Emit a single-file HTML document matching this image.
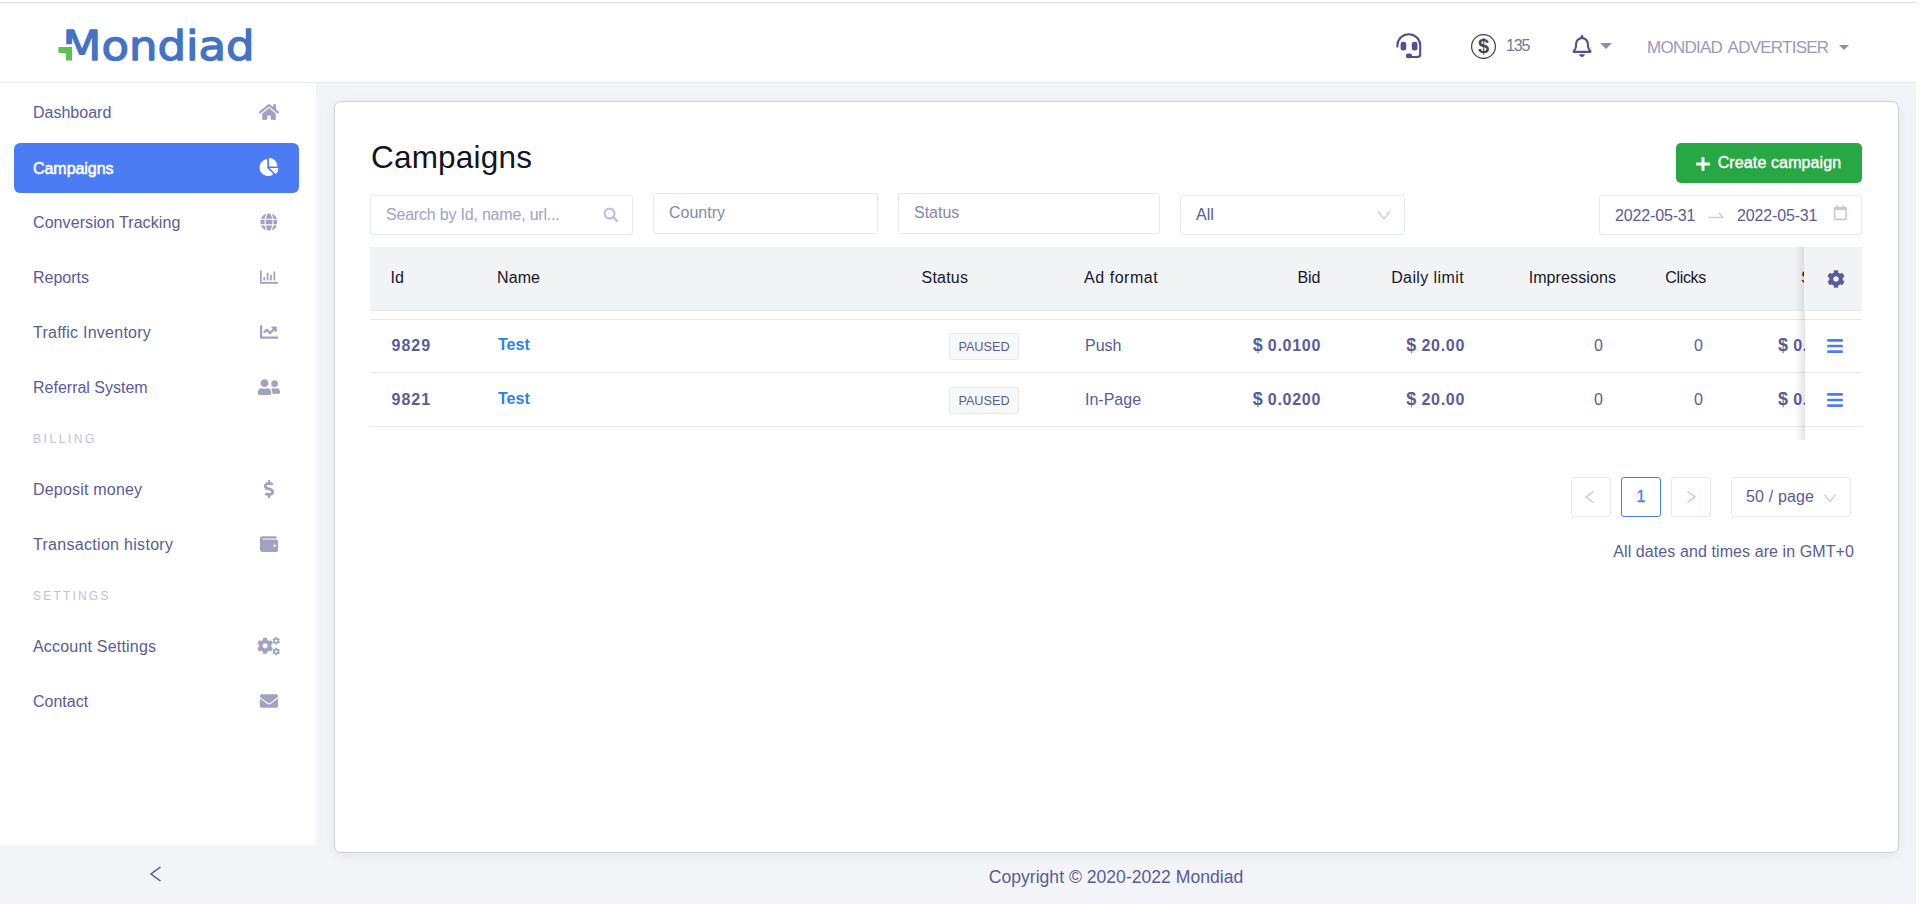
<!DOCTYPE html>
<html lang="en">
<head>
<meta charset="utf-8">
<title>Mondiad - Campaigns</title>
<style>
*{box-sizing:border-box;margin:0;padding:0}
html,body{width:1920px;height:904px;overflow:hidden;background:#fff}
body{font-family:"Liberation Sans",sans-serif;font-size:16px;color:#595c97;position:relative}
.abs{position:absolute}
.app{position:absolute;left:0;top:0;width:1916px;height:904px;background:#f2f4f8;overflow:hidden}
.topline{position:absolute;left:0;top:0;width:1916px;height:3px;background:#fff;border-bottom:1px solid #dbdedd}
.header{position:absolute;left:0;top:3px;width:1916px;height:80px;background:#fff;border-bottom:1px solid #e4e9f0}
.sidebar{position:absolute;left:0;top:83px;width:316px;height:762px;background:#fff}
.nav{position:absolute;left:14px;width:285px;height:50px;border-radius:6px}
.nav span{position:absolute;left:19px;top:1px;line-height:50px;font-size:16px;color:#595c97;white-space:nowrap}
.nav.active{background:#4b7cf3}
.nav.active span{color:#fff;-webkit-text-stroke:0.55px #fff;letter-spacing:-0.05px}
.ico{position:absolute;transform:translate(-50%,-50%)}
.cat{position:absolute;left:33px;font-size:12px;letter-spacing:2.4px;color:#c3bedc;text-transform:uppercase;line-height:14px}
.panel{position:absolute;left:334px;top:101px;width:1565px;height:752px;background:#fff;border:1px solid #cdd1d8;border-radius:7px;box-shadow:0 4px 12px 0 rgba(20,19,34,.04),0 0 12px 0 rgba(20,19,34,.03)}
.title{position:absolute;left:371px;top:138px;font-size:31.5px;line-height:38px;color:#141322;letter-spacing:0.2px;white-space:nowrap}
.inp{position:absolute;background:#fff;border:1px solid #e4e9f0;border-radius:3px;height:40px;font-size:16px;color:#a1a1c2;white-space:nowrap}
.inp span{position:absolute;left:15px;top:0;line-height:38px}
.btn{position:absolute;left:1676px;top:143px;width:186px;height:40px;background:#28a745;border-radius:5px;color:#fff;font-size:16px;line-height:40px;white-space:nowrap}
.thead{position:absolute;left:370px;top:247px;width:1492px;height:64px;background:#f2f3f5;border-bottom:1px solid #e4e9f0}
.th{position:absolute;top:268px;font-size:16px;line-height:20px;color:#17172b;white-space:nowrap}
.hr{position:absolute;left:370px;width:1492px;height:1px;background:#e4e9f0}
.td{position:absolute;font-size:16px;line-height:20px;color:#595c97;white-space:nowrap}
.b{font-weight:bold;letter-spacing:0.7px}
.d{font-size:18px;letter-spacing:0;line-height:0}
.r{text-align:right}
.tag{position:absolute;left:949px;width:70px;height:27px;border:1px solid #e4e9f0;background:#f7f8fa;border-radius:3px;font-size:12.7px;line-height:26.5px;text-align:center;color:#595c97}
.fix{position:absolute;left:1805px;top:247px;width:57px;height:193px;background:#fff}
.fixsh{position:absolute;left:1794px;top:247px;width:11px;height:193px;background:linear-gradient(to right,rgba(0,0,0,0),rgba(0,0,0,.03) 40%,rgba(0,0,0,.11))}
.fixh{position:absolute;left:-1px;top:0;width:58px;height:64px;background:#f2f3f5;border-bottom:1px solid #e4e9f0}
.pg{position:absolute;top:477px;height:40px;border:1px solid #e4e9f0;border-radius:3px;background:#fff;font-size:16px;line-height:38px;text-align:center;color:#595c97}
.foot{position:absolute;left:316px;top:866px;width:1600px;text-align:center;font-size:17.6px;line-height:22px;color:#595c97}
</style>
</head>
<body>
<div class="app">
  <div class="topline"></div>
  <div class="header">
    <!-- logo -->
    <svg class="abs" style="left:50px;top:17px" width="220" height="56" viewBox="50 20 220 56">
      <text x="62.6" y="59.8" font-family="DejaVu Sans, sans-serif" font-size="41.6" fill="#4472c4" stroke="#4472c4" stroke-width="1.3" stroke-linejoin="round" textLength="192" lengthAdjust="spacingAndGlyphs">Mondiad</text>
      <rect x="57" y="44.2" width="16" height="18" fill="#fff"/>
      <path d="M58.4 47H72V60.4H66V53H58.4Z" fill="#5bc250"/>
    </svg>
    <!-- headset -->
    <div class="ico" style="left:1409.3px;top:43.2px">
      <svg width="26" height="26" viewBox="0 0 26 26" fill="none" stroke="#4f4f91" stroke-width="2.1" stroke-linecap="round" style="display:block">
        <path d="M1.4 13.6V12.2a11.4 10.9 0 0 1 22.8 0v9a2.8 2.8 0 0 1 -2.8 2.8H13"/>
        <rect x="4.6" y="8.8" width="5.6" height="8.8" rx="2.4" fill="#4f4f91" stroke="none"/>
        <rect x="15.8" y="8.8" width="5.6" height="8.8" rx="2.4" fill="#4f4f91" stroke="none"/>
        <rect x="9.8" y="20.6" width="6.4" height="4.6" rx="2.3" fill="#4f4f91" stroke="none"/>
      </svg>
    </div>
    <!-- dollar circle -->
    <div class="abs" style="left:1470px;top:30px">
      <svg width="27" height="27" viewBox="0 0 27 27" style="display:block">
        <circle cx="13.5" cy="13.5" r="11.9" fill="none" stroke="#3c3c46" stroke-width="1.2"/>
        <text x="13.5" y="20.3" text-anchor="middle" font-family="Liberation Sans, sans-serif" font-weight="bold" font-size="20" fill="#44445a">$</text>
      </svg>
    </div>
    <div class="abs" style="left:1506px;top:33px;font-size:16px;line-height:20px;color:#74759a;letter-spacing:-1.1px">135</div>
    <!-- bell -->
    <div class="ico" style="left:1582.3px;top:42.7px"><svg width="19.25" height="22.0" viewBox="0 0 448 512" style="display:block"><path fill="#4f4f91" d="M439.39 362.29c-19.320-20.760-55.470-51.990-55.470-154.290 0-77.700-54.480-139.900-127.940-155.160V32c0-17.670-14.320-32-31.980-32s-31.980 14.330-31.980 32v20.840C118.560 68.100 64.080 130.300 64.080 208c0 102.300-36.150 133.530-55.470 154.290-6 6.450-8.660 14.160-8.610 21.710.11 16.400 12.980 32 32.100 32h383.800c19.120 0 32-15.600 32.100-32 .05-7.550-2.610-15.270-8.610-21.710zM67.530 368c21.220-27.970 44.420-74.330 44.530-159.420 0-.2-.06-.38-.06-.58 0-61.860 50.140-112 112-112s112 50.140 112 112c0 .2-.06.38-.06.58.11 85.100 23.310 131.460 44.530 159.420H67.530zM224 512c35.320 0 63.970-28.650 63.970-64H160.030c0 35.350 28.650 64 63.970 64z"/></svg></div>
    <div class="abs" style="left:1600px;top:40px;width:0;height:0;border-left:6px solid transparent;border-right:6px solid transparent;border-top:6px solid #8f8dab"></div>
    <div class="abs" style="left:1647px;top:34px;font-size:17px;line-height:22px;color:#9a9abc;letter-spacing:-0.75px;word-spacing:2.5px;white-space:nowrap">MONDIAD ADVERTISER</div>
    <div class="abs" style="left:1839.4px;top:42px;width:0;height:0;border-left:5.3px solid transparent;border-right:5.3px solid transparent;border-top:5.3px solid #8f8dab"></div>
  </div>

  <div class="sidebar"></div>
  <!-- nav (coordinates relative to app) -->
  <div class="nav" style="top:87px"><span>Dashboard</span></div>
  <div class="ico" style="left:269px;top:112px"><svg width="20.25" height="18.0" viewBox="0 0 576 512" style="display:block"><path fill="#a1a1c2" d="M280.37 148.26L96 300.11V464a16 16 0 0 0 16 16l112.060-.29a16 16 0 0 0 15.920-16V368a16 16 0 0 1 16-16h64a16 16 0 0 1 16 16v95.640a16 16 0 0 0 16 16.050L464 480a16 16 0 0 0 16-16V300L295.670 148.260a12.190 12.190 0 0 0-15.300 0zM571.600 251.470L488 182.560V44.050a12 12 0 0 0-12-12h-56a12 12 0 0 0-12 12v72.610L318.470 43a48 48 0 0 0-61 0L4.340 251.470a12 12 0 0 0-1.600 16.900l25.500 31A12 12 0 0 0 45.150 301l235.220-193.740a12.190 12.190 0 0 1 15.300 0L530.900 301a12 12 0 0 0 16.900-1.600l25.500-31a12 12 0 0 0-1.700-16.930z"/></svg></div>
  <div class="nav active" style="top:143px"><span>Campaigns</span></div>
  <div class="ico" style="left:269px;top:167px"><svg width="19.12" height="18.0" viewBox="0 0 544 512" style="display:block"><path fill="#ffffff" d="M527.79 288H290.5l158.03 158.03c6.04 6.04 15.98 6.53 22.19.68 38.7-36.46 65.32-85.61 73.13-140.86 1.34-9.46-6.51-17.85-16.06-17.85zm-15.83-64.8C503.72 103.74 408.26 8.28 288.8.04 279.68-.59 272 7.1 272 16.24V240h223.77c9.14 0 16.82-7.68 16.19-16.8zM224 288V50.71c0-9.55-8.39-17.4-17.84-16.06C86.99 51.49-4.1 155.6.14 280.37 4.5 408.51 114.83 513.59 243.03 511.98c50.4-.63 96.97-16.87 135.26-44.03 7.9-5.6 8.42-17.23 1.57-24.08L224 288z"/></svg></div>
  <div class="nav" style="top:197px"><span style="letter-spacing:0.08px">Conversion Tracking</span></div>
  <div class="ico" style="left:269px;top:222px"><svg width="17.44" height="18.0" viewBox="0 0 496 512" style="display:block"><path fill="#a1a1c2" d="M336.5 160C322 70.700 287.800 8 248 8s-74 62.700-88.500 152h177zM152 256c0 22.200 1.200 43.500 3.300 64h185.300c2.100-20.500 3.300-41.800 3.300-64s-1.200-43.500-3.300-64H155.300c-2.100 20.500-3.300 41.800-3.300 64zm324.700-96c-28.600-67.900-86.500-120.400-158-141.600 24.400 33.800 41.200 84.700 50 141.600h108zM177.200 18.400C105.800 39.600 47.800 92.100 19.300 160h108c8.700-56.900 25.500-107.800 49.900-141.600zM487.400 192H372.700c2.100 21 3.300 42.500 3.300 64s-1.200 43-3.300 64h114.600c5.500-20.500 8.600-41.800 8.600-64s-3.100-43.500-8.500-64zM120 256c0-21.500 1.200-43 3.300-64H8.600C3.200 212.500 0 233.800 0 256s3.200 43.500 8.600 64h114.600c-2-21-3.200-42.500-3.200-64zm39.500 96c14.500 89.300 48.700 152 88.500 152s74-62.700 88.500-152h-177zm159.300 141.600c71.400-21.200 129.400-73.700 158-141.600h-108c-8.800 56.900-25.600 107.800-50 141.600zM19.300 352c28.600 67.900 86.500 120.400 158 141.600-24.400-33.800-41.200-84.700-50-141.600h-108z"/></svg></div>
  <div class="nav" style="top:252px"><span>Reports</span></div>
  <div class="ico" style="left:269px;top:277px"><svg width="18.00" height="18.0" viewBox="0 0 512 512" style="display:block"><path fill="#a1a1c2" d="M396.8 352h22.400c6.400 0 12.800-6.400 12.800-12.800V108.800c0-6.400-6.400-12.800-12.800-12.800h-22.400c-6.400 0-12.800 6.400-12.800 12.800v230.400c0 6.400 6.400 12.800 12.800 12.800zm-192 0h22.400c6.400 0 12.800-6.400 12.800-12.800V140.800c0-6.400-6.400-12.800-12.800-12.800h-22.400c-6.400 0-12.800 6.400-12.800 12.800v198.400c0 6.400 6.400 12.800 12.800 12.800zm96 0h22.400c6.400 0 12.800-6.400 12.800-12.800V204.800c0-6.400-6.400-12.800-12.800-12.800h-22.400c-6.400 0-12.800 6.400-12.800 12.800v134.400c0 6.400 6.400 12.800 12.800 12.800zM496 400H48V80c0-8.840-7.160-16-16-16H16C7.160 64 0 71.160 0 80v336c0 17.670 14.330 32 32 32h464c8.840 0 16-7.160 16-16v-16c0-8.840-7.160-16-16-16zm-387.200-48h22.400c6.400 0 12.800-6.400 12.800-12.800v-70.400c0-6.400-6.400-12.800-12.800-12.800h-22.400c-6.400 0-12.800 6.400-12.800 12.800v70.400c0 6.400 6.400 12.800 12.800 12.800z"/></svg></div>
  <div class="nav" style="top:307px"><span style="letter-spacing:0.25px">Traffic Inventory</span></div>
  <div class="ico" style="left:269px;top:332px"><svg width="18.00" height="18.0" viewBox="0 0 512 512" style="display:block"><path fill="#a1a1c2" d="M496 384H64V80c0-8.840-7.160-16-16-16H16C7.160 64 0 71.160 0 80v336c0 17.670 14.330 32 32 32h464c8.840 0 16-7.160 16-16v-32c0-8.840-7.160-16-16-16zM464 96H345.940c-21.380 0-32.090 25.850-16.970 40.970l32.400 32.400L288 242.750l-73.370-73.370c-12.500-12.500-32.760-12.500-45.250 0l-68.690 68.690c-6.250 6.250-6.250 16.380 0 22.630l22.620 22.620c6.250 6.250 16.380 6.250 22.630 0L192 237.250l73.370 73.370c12.500 12.500 32.760 12.500 45.250 0l96-96 32.400 32.400c15.120 15.120 40.970 4.410 40.970-16.970V112c.01-8.840-7.150-16-15.990-16z"/></svg></div>
  <div class="nav" style="top:362px"><span>Referral System</span></div>
  <div class="ico" style="left:269px;top:387px"><svg width="22.50" height="18.0" viewBox="0 0 640 512" style="display:block"><path fill="#a1a1c2" d="M192 256c61.9 0 112-50.1 112-112S253.9 32 192 32 80 82.1 80 144s50.1 112 112 112zm76.8 32h-8.3c-20.800 10-43.900 16-68.500 16s-47.600-6-68.500-16h-8.300C51.600 288 0 339.600 0 403.200V432c0 26.500 21.500 48 48 48h288c26.500 0 48-21.500 48-48v-28.800c0-63.600-51.600-115.200-115.200-115.200zM480 256c53 0 96-43 96-96s-43-96-96-96-96 43-96 96 43 96 96 96zm48 32h-3.800c-13.900 4.800-28.600 8-44.200 8s-30.300-3.200-44.200-8H432c-20.400 0-39.200 5.900-55.700 15.400 24.400 26.300 39.700 61.200 39.700 99.800v38.400c0 2.200-.5 4.300-.6 6.400H592c26.500 0 48-21.500 48-48 0-61.900-50.100-112-112-112z"/></svg></div>
  <div class="cat" style="top:432px;letter-spacing:2.55px">Billing</div>
  <div class="nav" style="top:464px"><span style="letter-spacing:0.2px">Deposit money</span></div>
  <div class="ico" style="left:269px;top:489px"><svg width="10.12" height="18.0" viewBox="0 0 288 512" style="display:block"><path fill="#a1a1c2" d="M209.2 233.4l-108-31.6C88.7 198.200 80 186.500 80 173.500c0-16.300 13.200-29.500 29.500-29.500h66.300c12.200 0 24.200 3.700 34.200 10.500 6.100 4.100 14.300 3.100 19.500-2l34.800-34c7.100-6.900 6.100-18.400-1.800-24.500C238 74.800 207.400 64.100 176 64V16c0-8.800-7.200-16-16-16h-32c-8.800 0-16 7.200-16 16v48h-2.500C45.800 64-5.400 118.700.5 183.600c4.200 46.100 39.400 83.600 83.800 96.600l102.500 30c12.500 3.700 21.200 15.300 21.200 28.300 0 16.300-13.200 29.500-29.500 29.500h-66.300C100 368 88 364.300 78 357.500c-6.100-4.100-14.300-3.100-19.500 2l-34.800 34c-7.100 6.900-6.100 18.400 1.800 24.500 24.500 19.200 55.100 29.900 86.500 30v48c0 8.800 7.200 16 16 16h32c8.800 0 16-7.200 16-16v-48.200c46.600-.9 90.300-28.600 105.700-72.700 21.500-61.600-14.600-124.800-72.500-141.700z"/></svg></div>
  <div class="nav" style="top:519px"><span style="letter-spacing:0.3px">Transaction history</span></div>
  <div class="ico" style="left:269px;top:544px"><svg width="18.00" height="18.0" viewBox="0 0 512 512" style="display:block"><path fill="#a1a1c2" d="M461.2 128H80c-8.840 0-16-7.160-16-16s7.160-16 16-16h384c8.840 0 16-7.160 16-16 0-26.510-21.490-48-48-48H64C28.650 32 0 60.650 0 96v320c0 35.350 28.650 64 64 64h397.200c28.020 0 50.800-21.530 50.800-48V176c0-26.470-22.780-48-50.800-48zM416 336c-17.670 0-32-14.330-32-32s14.330-32 32-32 32 14.330 32 32-14.330 32-32 32z"/></svg></div>
  <div class="cat" style="top:589px;letter-spacing:2.2px">Settings</div>
  <div class="nav" style="top:621px"><span style="letter-spacing:0.2px">Account Settings</span></div>
  <div class="abs" style="left:256px;top:636px"><svg width="24" height="20" viewBox="0 0 24 20" style="display:block"><path fill="#a1a1c2" transform="translate(0.800,1.500) scale(0.03242)" d="M487.4 315.7l-42.600-24.600c4.300-23.200 4.300-47 0-70.200l42.600-24.600c4.900-2.800 7.100-8.600 5.500-14-11.100-35.600-30-67.800-54.700-94.600-3.800-4.100-10-5.100-14.800-2.300L380.800 110c-17.900-15.400-38.500-27.300-60.800-35.100V25.800c0-5.600-3.900-10.500-9.400-11.700-36.700-8.200-74.300-7.800-109.200 0-5.500 1.200-9.400 6.100-9.400 11.700V75c-22.200 7.900-42.800 19.800-60.800 35.100L88.700 85.500c-4.900-2.800-11-1.900-14.800 2.300-24.700 26.700-43.600 58.900-54.700 94.600-1.700 5.400.6 11.200 5.500 14L67.300 221c-4.300 23.200-4.300 47 0 70.200l-42.600 24.600c-4.900 2.800-7.100 8.600-5.500 14 11.100 35.600 30 67.800 54.700 94.600 3.800 4.100 10 5.100 14.800 2.300l42.600-24.600c17.900 15.400 38.500 27.300 60.800 35.100v49.200c0 5.600 3.900 10.500 9.400 11.700 36.700 8.200 74.300 7.800 109.200 0 5.500-1.200 9.400-6.100 9.400-11.700v-49.200c22.200-7.900 42.800-19.800 60.800-35.100l42.600 24.600c4.900 2.800 11 1.900 14.800-2.300 24.700-26.700 43.600-58.900 54.700-94.600 1.500-5.500-.7-11.300-5.600-14.100zM256 336c-44.100 0-80-35.900-80-80s35.900-80 80-80 80 35.900 80 80-35.900 80-80 80z"/><path fill="#a1a1c2" transform="translate(16.250,0.850) scale(0.01543)" d="M487.4 315.7l-42.600-24.600c4.300-23.200 4.300-47 0-70.200l42.600-24.600c4.900-2.800 7.100-8.600 5.500-14-11.100-35.600-30-67.800-54.700-94.600-3.800-4.100-10-5.100-14.800-2.300L380.800 110c-17.900-15.400-38.500-27.300-60.800-35.100V25.800c0-5.600-3.900-10.500-9.400-11.700-36.700-8.200-74.300-7.800-109.200 0-5.500 1.200-9.400 6.100-9.400 11.700V75c-22.200 7.900-42.800 19.800-60.800 35.100L88.700 85.500c-4.900-2.800-11-1.900-14.800 2.300-24.700 26.700-43.600 58.900-54.700 94.600-1.700 5.400.6 11.200 5.500 14L67.300 221c-4.300 23.200-4.300 47 0 70.200l-42.600 24.600c-4.900 2.800-7.100 8.600-5.500 14 11.100 35.600 30 67.800 54.700 94.600 3.800 4.100 10 5.100 14.800 2.300l42.600-24.600c17.900 15.400 38.500 27.300 60.800 35.100v49.200c0 5.600 3.900 10.500 9.400 11.700 36.700 8.200 74.300 7.800 109.200 0 5.500-1.200 9.400-6.100 9.400-11.700v-49.200c22.200-7.900 42.800-19.800 60.800-35.100l42.600 24.600c4.900 2.800 11 1.900 14.800-2.300 24.700-26.700 43.600-58.900 54.700-94.600 1.500-5.500-.7-11.300-5.600-14.100zM256 336c-44.100 0-80-35.900-80-80s35.900-80 80-80 80 35.900 80 80-35.900 80-80 80z"/><path fill="#a1a1c2" transform="translate(16.250,11.550) scale(0.01543)" d="M487.4 315.7l-42.600-24.600c4.300-23.200 4.300-47 0-70.200l42.600-24.600c4.900-2.800 7.100-8.600 5.500-14-11.100-35.600-30-67.800-54.700-94.600-3.800-4.100-10-5.100-14.800-2.300L380.800 110c-17.900-15.400-38.500-27.300-60.800-35.100V25.800c0-5.600-3.900-10.500-9.400-11.700-36.700-8.200-74.300-7.800-109.200 0-5.500 1.200-9.400 6.100-9.400 11.700V75c-22.200 7.900-42.800 19.800-60.800 35.100L88.700 85.500c-4.900-2.800-11-1.900-14.800 2.300-24.700 26.700-43.600 58.900-54.700 94.600-1.700 5.400.6 11.200 5.500 14L67.300 221c-4.300 23.200-4.300 47 0 70.200l-42.600 24.600c-4.900 2.800-7.100 8.600-5.500 14 11.100 35.600 30 67.800 54.700 94.600 3.800 4.100 10 5.100 14.800 2.300l42.600-24.600c17.900 15.400 38.500 27.300 60.800 35.100v49.200c0 5.600 3.900 10.500 9.400 11.700 36.700 8.200 74.300 7.800 109.200 0 5.500-1.200 9.400-6.100 9.400-11.700v-49.200c22.200-7.900 42.800-19.800 60.800-35.100l42.600 24.600c4.900 2.800 11 1.900 14.800-2.300 24.700-26.700 43.600-58.900 54.700-94.600 1.500-5.500-.7-11.300-5.600-14.100zM256 336c-44.100 0-80-35.900-80-80s35.900-80 80-80 80 35.900 80 80-35.900 80-80 80z"/></svg></div>
  <div class="nav" style="top:676px"><span>Contact</span></div>
  <div class="ico" style="left:269px;top:701px"><svg width="18.00" height="18.0" viewBox="0 0 512 512" style="display:block"><path fill="#a1a1c2" d="M502.3 190.8c3.900-3.100 9.700-.2 9.700 4.700V400c0 26.500-21.500 48-48 48H48c-26.500 0-48-21.500-48-48V195.600c0-5 5.700-7.800 9.700-4.700 22.400 17.400 52.100 39.500 154.100 113.600 21.100 15.400 56.700 47.800 92.200 47.600 35.700.3 72-32.800 92.300-47.600 102-74.100 131.600-96.300 154-113.700zM256 320c23.200.4 56.600-29.200 73.400-41.400 132.700-96.300 142.800-104.700 173.400-128.700 5.800-4.500 9.200-11.500 9.200-18.900v-19c0-26.500-21.500-48-48-48H48C21.500 64 0 85.500 0 112v19c0 7.400 3.400 14.300 9.200 18.900 30.600 23.900 40.700 32.400 173.400 128.700 16.800 12.200 50.200 41.800 73.400 41.400z"/></svg></div>
  <!-- collapse -->
  <svg class="abs" style="left:148px;top:864px" width="16" height="20" viewBox="0 0 16 20" fill="none" stroke="#4f4f91" stroke-width="1.4"><path d="M12.5 3L3 10L12.5 17"/></svg>

  <div class="panel"></div>
  <div class="title">Campaigns</div>
  <div class="btn"><span class="abs" style="left:41.7px;top:0px;letter-spacing:0.12px;-webkit-text-stroke:0.4px #fff">Create campaign</span></div>
  <div class="ico" style="left:1702.5px;top:163.5px"><svg width="14.00" height="16.0" viewBox="0 0 448 512" style="display:block"><path fill="#ffffff" d="M416 208H272V64c0-17.670-14.330-32-32-32h-32c-17.670 0-32 14.330-32 32v144H32c-17.670 0-32 14.330-32 32v32c0 17.670 14.330 32 32 32h144v144c0 17.670 14.330 32 32 32h32c17.670 0 32-14.330 32-32V304h144c17.670 0 32-14.330 32-32v-32c0-17.670-14.330-32-32-32z"/></svg></div>

  <div class="inp" style="left:370px;top:195px;width:263px"><span style="letter-spacing:-0.2px">Search by Id, name, url...</span></div>
  <div class="ico" style="left:611px;top:214.5px"><svg width="15.00" height="15.0" viewBox="0 0 512 512" style="display:block"><path fill="#c3c3da" d="M505 442.7L405.300 343c-4.500-4.500-10.600-7-17-7H372c27.600-35.300 44-79.700 44-128C416 93.100 322.900 0 208 0S0 93.100 0 208s93.100 208 208 208c48.300 0 92.700-16.400 128-44v16.300c0 6.400 2.500 12.500 7 17l99.700 99.700c9.400 9.400 24.600 9.400 33.900 0l28.300-28.300c9.400-9.400 9.400-24.600.1-34zM208 336c-70.700 0-128-57.200-128-128 0-70.700 57.200-128 128-128 70.700 0 128 57.200 128 128 0 70.700-57.200 128-128 128z"/></svg></div>
  <div class="inp" style="left:653px;top:193px;width:225px;height:41px;color:#8687ae"><span>Country</span></div>
  <div class="inp" style="left:898px;top:193px;width:262px;height:41px;color:#8687ae"><span>Status</span></div>
  <div class="inp" style="left:1180px;top:195px;width:225px;color:#595c97"><span>All</span></div>
  <svg class="abs" style="left:1376px;top:209px" width="16" height="12" viewBox="0 0 16 12" fill="none" stroke="#c2c2d8" stroke-width="1.2"><path d="M2.2 2.4L8 9.8L13.8 2.4"/></svg>
  <div class="inp" style="left:1599px;top:195px;width:263px;color:#595c97"><span style="left:15px;top:1px;letter-spacing:-0.15px">2022-05-31</span><span style="left:137px;top:1px;letter-spacing:-0.15px">2022-05-31</span></div>
  <svg class="abs" style="left:1707px;top:209px" width="18" height="10" viewBox="0 0 18 10" fill="none" stroke="#cdcadf" stroke-width="1.5" stroke-linejoin="round"><path d="M1.8 8.4H16L12 3.8"/></svg>
  <svg class="abs" style="left:1832px;top:204px" width="16" height="17" viewBox="0 0 16 17" fill="none" stroke="#c9c6de" stroke-width="1.6"><rect x="2.6" y="3.6" width="11.6" height="11.8" rx="0.8"/><path d="M2.6 5H14.2" stroke-width="2.2"/><path d="M5.4 1.2V4M11.4 1.2V4"/></svg>

  <!-- table -->
  <div class="thead"></div>
  <div class="th" style="left:390.5px">Id</div>
  <div class="th" style="left:497px;letter-spacing:0.1px">Name</div>
  <div class="th" style="left:921.6px;letter-spacing:0.2px">Status</div>
  <div class="th" style="left:1084px;letter-spacing:0.55px">Ad format</div>
  <div class="th r" style="right:595.5px">Bid</div>
  <div class="th r" style="right:452px;letter-spacing:0.4px">Daily limit</div>
  <div class="th r" style="right:300px;letter-spacing:0.1px">Impressions</div>
  <div class="th r" style="right:210px;letter-spacing:-0.3px">Clicks</div>
  <div class="th" style="left:1801px">Spent</div>
  <div class="hr" style="top:319px"></div>
  <div class="hr" style="top:372px"></div>
  <div class="hr" style="top:426px"></div>

  <div class="td b" style="left:391.5px;top:336px;letter-spacing:1px">9829</div>
  <div class="td b" style="left:498px;top:335px;color:#2b83e6;letter-spacing:0">Test</div>
  <div class="tag" style="top:333px">PAUSED</div>
  <div class="td" style="left:1085px;top:336px">Push</div>
  <div class="td b r" style="right:595px;top:336px"><span class="d">$</span> 0.0100</div>
  <div class="td b r" style="right:451px;top:336px"><span class="d">$</span> 20.00</div>
  <div class="td r" style="right:313px;top:336px">0</div>
  <div class="td r" style="right:213px;top:336px">0</div>
  <div class="td b" style="left:1778px;top:336px"><span class="d">$</span> 0.00</div>

  <div class="td b" style="left:391.5px;top:390px;letter-spacing:1px">9821</div>
  <div class="td b" style="left:498px;top:389px;color:#2b83e6;letter-spacing:0">Test</div>
  <div class="tag" style="top:387px">PAUSED</div>
  <div class="td" style="left:1085px;top:390px">In-Page</div>
  <div class="td b r" style="right:595px;top:390px"><span class="d">$</span> 0.0200</div>
  <div class="td b r" style="right:451px;top:390px"><span class="d">$</span> 20.00</div>
  <div class="td r" style="right:313px;top:390px">0</div>
  <div class="td r" style="right:213px;top:390px">0</div>
  <div class="td b" style="left:1778px;top:390px"><span class="d">$</span> 0.00</div>

  <div class="fixsh"></div>
  <div class="fix">
    <div class="fixh"></div>
    <div class="abs" style="left:0;top:72px;width:57px;height:1px;background:#e4e9f0"></div>
    <div class="abs" style="left:0;top:125px;width:57px;height:1px;background:#e4e9f0"></div>
    <div class="abs" style="left:0;top:179px;width:57px;height:1px;background:#e4e9f0"></div>
  </div>
  <div class="ico" style="left:1835.5px;top:279.4px"><svg width="18.00" height="18.0" viewBox="0 0 512 512" style="display:block"><path fill="#585b9b" d="M487.4 315.7l-42.600-24.600c4.300-23.200 4.300-47 0-70.200l42.600-24.600c4.900-2.800 7.100-8.600 5.500-14-11.100-35.600-30-67.800-54.700-94.600-3.800-4.100-10-5.100-14.800-2.300L380.800 110c-17.900-15.400-38.500-27.300-60.800-35.100V25.800c0-5.600-3.900-10.500-9.400-11.700-36.700-8.200-74.300-7.800-109.200 0-5.500 1.200-9.400 6.100-9.400 11.700V75c-22.200 7.900-42.800 19.800-60.800 35.100L88.700 85.500c-4.900-2.800-11-1.900-14.800 2.300-24.700 26.700-43.600 58.900-54.700 94.600-1.700 5.400.6 11.200 5.500 14L67.300 221c-4.300 23.200-4.300 47 0 70.200l-42.600 24.600c-4.900 2.800-7.100 8.600-5.500 14 11.100 35.600 30 67.800 54.700 94.600 3.800 4.100 10 5.100 14.800 2.300l42.600-24.600c17.900 15.400 38.500 27.300 60.800 35.100v49.200c0 5.600 3.900 10.500 9.400 11.700 36.700 8.200 74.300 7.800 109.200 0 5.500-1.200 9.400-6.100 9.400-11.700v-49.200c22.200-7.900 42.800-19.800 60.800-35.100l42.600 24.600c4.900 2.800 11 1.900 14.800-2.300 24.700-26.700 43.600-58.900 54.700-94.600 1.500-5.500-.7-11.300-5.600-14.100zM256 336c-44.100 0-80-35.900-80-80s35.900-80 80-80 80 35.900 80 80-35.900 80-80 80z"/></svg></div>
  <div class="ico" style="left:1835px;top:346px"><svg width="15.75" height="18.0" viewBox="0 0 448 512" style="display:block"><path fill="#4b7cf3" d="M16 132h416c8.837 0 16-7.163 16-16V76c0-8.837-7.163-16-16-16H16C7.163 60 0 67.163 0 76v40c0 8.837 7.163 16 16 16zm0 160h416c8.837 0 16-7.163 16-16v-40c0-8.837-7.163-16-16-16H16c-8.837 0-16 7.163-16 16v40c0 8.837 7.163 16 16 16zm0 160h416c8.837 0 16-7.163 16-16v-40c0-8.837-7.163-16-16-16H16c-8.837 0-16 7.163-16 16v40c0 8.837 7.163 16 16 16z"/></svg></div>
  <div class="ico" style="left:1835px;top:400px"><svg width="15.75" height="18.0" viewBox="0 0 448 512" style="display:block"><path fill="#4b7cf3" d="M16 132h416c8.837 0 16-7.163 16-16V76c0-8.837-7.163-16-16-16H16C7.163 60 0 67.163 0 76v40c0 8.837 7.163 16 16 16zm0 160h416c8.837 0 16-7.163 16-16v-40c0-8.837-7.163-16-16-16H16c-8.837 0-16 7.163-16 16v40c0 8.837 7.163 16 16 16zm0 160h416c8.837 0 16-7.163 16-16v-40c0-8.837-7.163-16-16-16H16c-8.837 0-16 7.163-16 16v40c0 8.837 7.163 16 16 16z"/></svg></div>

  <!-- pagination -->
  <div class="pg" style="left:1571px;width:40px"></div>
  <svg class="abs" style="left:1584px;top:490px" width="12" height="14" viewBox="0 0 12 14" fill="none" stroke="#c3c3da" stroke-width="1.2"><path d="M9.5 1.5L2 7L9.5 12.5"/></svg>
  <div class="pg" style="left:1621px;width:40px;border-color:#4b7cf3;color:#4b7cf3;-webkit-text-stroke:0.3px #4b7cf3">1</div>
  <div class="pg" style="left:1671px;width:40px"></div>
  <svg class="abs" style="left:1685px;top:490px" width="12" height="14" viewBox="0 0 12 14" fill="none" stroke="#c3c3da" stroke-width="1.2"><path d="M2.5 1.5L10 7L2.5 12.5"/></svg>
  <div class="pg" style="left:1731px;width:120px;text-align:left;padding-left:14px;letter-spacing:0.15px">50 / page</div>
  <svg class="abs" style="left:1823px;top:493px" width="14" height="10" viewBox="0 0 14 10" fill="none" stroke="#c3c3da" stroke-width="1.2"><path d="M1.5 1.5L7 8.5L12.5 1.5"/></svg>
  <div class="abs r" style="right:62px;top:542px;font-size:16px;line-height:20px;color:#595c97;white-space:nowrap;letter-spacing:0.09px">All dates and times are in GMT+0</div>

  <div class="foot">Copyright © 2020-2022 Mondiad</div>
</div>
</body>
</html>
